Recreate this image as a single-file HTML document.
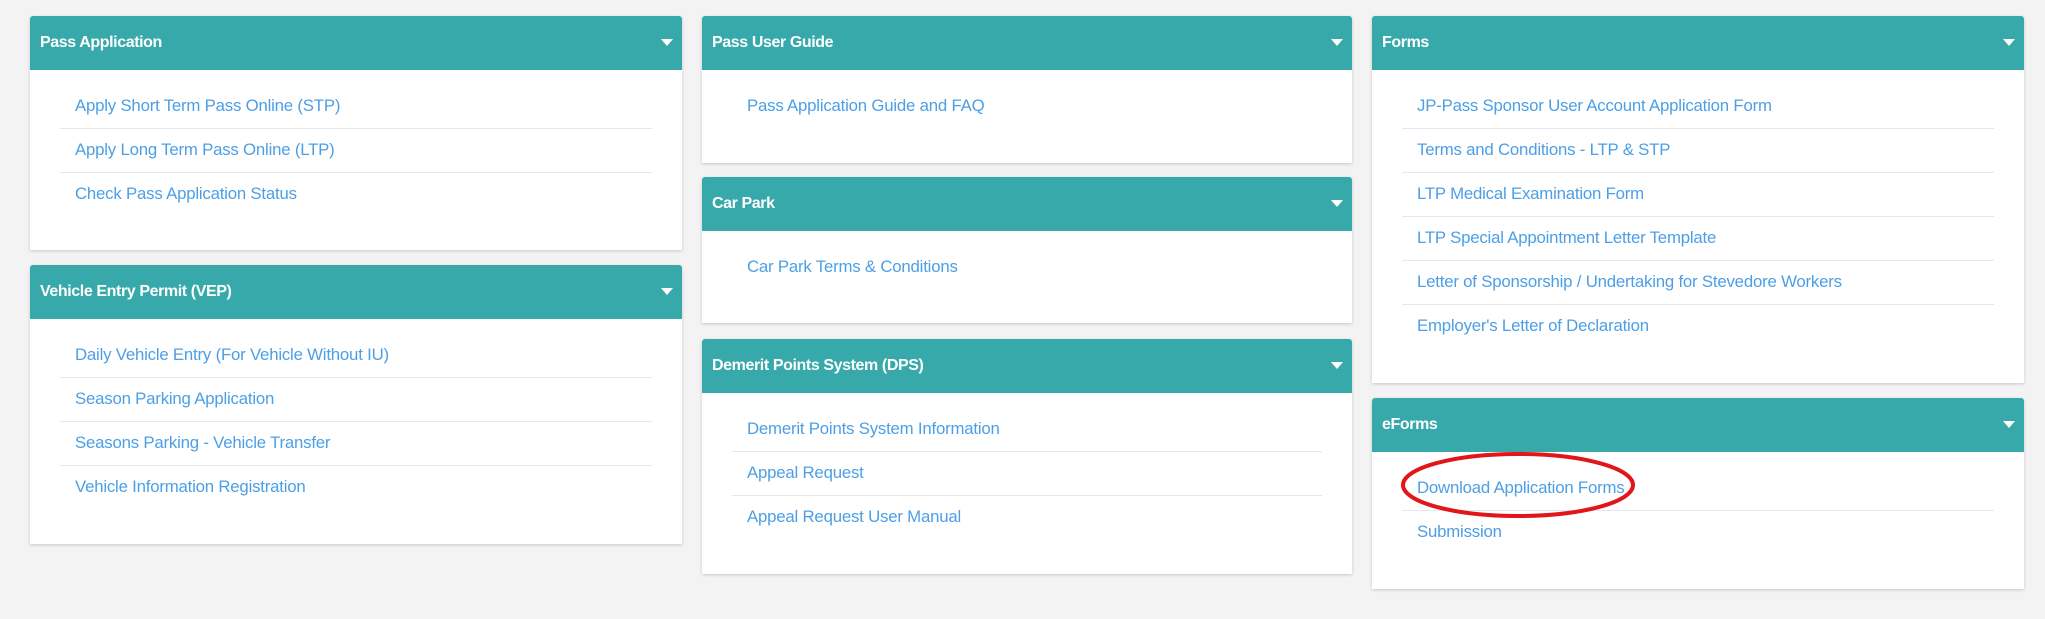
<!DOCTYPE html>
<html><head><style>
body{margin:0;width:2045px;height:619px;background:#f3f3f3;font-family:"Liberation Sans",Arial,sans-serif;position:relative;overflow:hidden}
.p{position:absolute;background:#fff;box-shadow:0 1px 3px rgba(0,0,0,.18);border-radius:3px 3px 0 0}
.h{height:54px;background:#37a9aa;color:#fff;font-weight:bold;font-size:16px;line-height:54px;padding-left:10px;position:relative;border-radius:3px 3px 0 0;letter-spacing:-0.4px}
.h:after{content:"";position:absolute;right:9px;top:23px;border-left:6px solid transparent;border-right:6px solid transparent;border-top:7px solid #fff}
ul{list-style:none;margin:15px 30px 0 30px;padding:0}
li{height:43px;line-height:42px;border-bottom:1px solid #e3e6ea;padding-left:15px;color:#4c9fe6;font-size:16.8px;letter-spacing:-0.2px}
li:last-child{border-bottom:none}
</style></head><body>
<div class="p" style="left:30px;top:16px;width:652px;height:234px"><div class="h">Pass Application</div><ul><li>Apply Short Term Pass Online (STP)</li><li>Apply Long Term Pass Online (LTP)</li><li>Check Pass Application Status</li></ul></div>
<div class="p" style="left:30px;top:265px;width:652px;height:279px"><div class="h">Vehicle Entry Permit (VEP)</div><ul><li>Daily Vehicle Entry (For Vehicle Without IU)</li><li>Season Parking Application</li><li>Seasons Parking - Vehicle Transfer</li><li>Vehicle Information Registration</li></ul></div>
<div class="p" style="left:702px;top:16px;width:650px;height:147px"><div class="h">Pass User Guide</div><ul><li>Pass Application Guide and FAQ</li></ul></div>
<div class="p" style="left:702px;top:177px;width:650px;height:146px"><div class="h">Car Park</div><ul><li>Car Park Terms &amp; Conditions</li></ul></div>
<div class="p" style="left:702px;top:339px;width:650px;height:235px"><div class="h">Demerit Points System (DPS)</div><ul><li>Demerit Points System Information</li><li>Appeal Request</li><li>Appeal Request User Manual</li></ul></div>
<div class="p" style="left:1372px;top:16px;width:652px;height:367px"><div class="h">Forms</div><ul><li>JP-Pass Sponsor User Account Application Form</li><li>Terms and Conditions - LTP &amp; STP</li><li>LTP Medical Examination Form</li><li>LTP Special Appointment Letter Template</li><li>Letter of Sponsorship / Undertaking for Stevedore Workers</li><li>Employer's Letter of Declaration</li></ul></div>
<div class="p" style="left:1372px;top:398px;width:652px;height:191px"><div class="h">eForms</div><ul><li>Download Application Forms</li><li>Submission</li></ul></div>
<svg style="position:absolute;left:0;top:0" width="2045" height="619"><ellipse cx="1518" cy="485" rx="115" ry="31" fill="none" stroke="#e0161b" stroke-width="4"/></svg>
</body></html>
